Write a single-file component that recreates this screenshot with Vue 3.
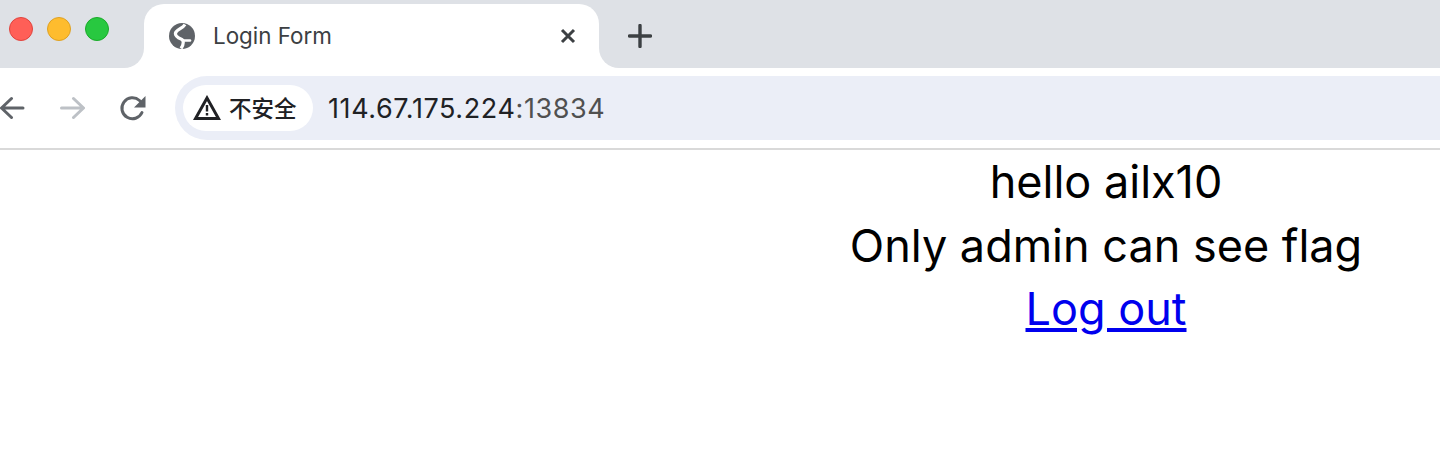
<template>
  <div class="browser">
    <!-- Tab strip -->
    <div class="tab-strip">
      <div class="strip-left">
        <span v-for="c in lights" :key="c" class="light" :class="c"></span>
      </div>
      <div class="tab-wrap">
        <div class="tab">
          <svg class="globe" viewBox="0 0 26 26">
            <circle cx="13" cy="13" r="13" fill="#5f6368" />
            <path d="M16 1.500C14 5 9 6 7 9C5 12 9 15 12 16C15 17 15 21 12 25.500" fill="none" stroke="#fff" stroke-width="3.200" />
            <path d="M14 17.500H21" fill="none" stroke="#fff" stroke-width="2.600" stroke-linecap="round" />
          </svg>
          <span class="tab-title">Login Form</span>
          <svg class="tab-close" viewBox="0 0 16 16">
            <path d="M2 2l12 12M14 2L2 14" stroke="#3c4043" stroke-width="3" />
          </svg>
        </div>
      </div>
      <div class="strip-right">
        <svg class="new-tab" viewBox="0 0 24 24">
          <path d="M12 1.500v21M1.500 12h21" stroke="#3c4043" stroke-width="3.400" stroke-linecap="round" />
        </svg>
      </div>
    </div>

    <!-- Toolbar -->
    <div class="toolbar">
      <svg class="nav back" viewBox="0 0 25 24">
        <path d="M23 12H1.500M11.500 2.500L1.500 12l10 9.500" fill="none" stroke="#5f6368" stroke-width="3" stroke-linecap="round" stroke-linejoin="round" />
      </svg>
      <svg class="nav forward" viewBox="0 0 25 24">
        <path d="M1.500 12h21.500M13.500 2.500L23.500 12l-10 9.500" fill="none" stroke="#bdc1c6" stroke-width="3" stroke-linecap="round" stroke-linejoin="round" />
      </svg>
      <svg class="nav reload" viewBox="0 0 28 28">
        <path d="M23 18.500A10.500 10.500 0 1 1 20.500 6.500l2 2" fill="none" stroke="#5f6368" stroke-width="3" stroke-linecap="round" />
        <path d="M26.500 2V13.500H15z" fill="#5f6368" />
      </svg>
      <div class="omnibox">
        <div class="chip">
          <svg class="warn" viewBox="0 0 28 26">
            <path d="M14 3L25.500 23.500H2.500z" fill="none" stroke="#202124" stroke-width="3" stroke-linejoin="miter" />
            <path d="M14 10v6.500M14 18v2.500" stroke="#202124" stroke-width="2.400" />
          </svg>
          <span class="chip-text">不安全</span>
        </div>
        <span class="url">114.67.175.224<span class="port">:13834</span></span>
      </div>
    </div>

    <!-- Page content -->
    <div class="page">
      <div class="line">hello ailx10</div>
      <div class="line">Only admin can see flag</div>
      <div class="line"><a href="#">Log out</a></div>
    </div>
  </div>
</template>

<script setup>
const lights = ['red', 'yellow', 'green']
</script>

<style>
html, body {
  margin: 0;
  background: #fff;
}
</style>

<style scoped>
.browser {
  height: 453px;
  overflow: hidden;
  background: #fff;
  font-family: "Liberation Sans", "Noto Sans CJK SC", sans-serif;
}

/* Tab strip */
.tab-strip {
  display: flex;
  height: 68px;
  background: #fff;
}

.strip-left {
  width: 144px;
  background: #dee1e6;
  border-bottom-right-radius: 20px;
  display: flex;
  gap: 14px;
  padding: 17px 0 0 9px;
  box-sizing: border-box;
}

.light {
  width: 24px;
  height: 24px;
  border-radius: 50%;
  box-sizing: border-box;
}

.light.red {
  background: #ff5f57;
  border: 1px solid #e0443e;
}

.light.yellow {
  background: #febc2e;
  border: 1px solid #dea123;
}

.light.green {
  background: #28c840;
  border: 1px solid #1aab29;
}

.tab-wrap {
  width: 455px;
  background: #dee1e6;
  padding-top: 4px;
  box-sizing: border-box;
}

.tab {
  height: 64px;
  background: #fff;
  border-radius: 20px 20px 0 0;
  display: flex;
  align-items: center;
  padding: 0 23px 0 25px;
  box-sizing: border-box;
}

.globe {
  width: 26px;
  height: 26px;
  flex-shrink: 0;
}

.tab-title {
  margin: -2px 0 0 18px;
  flex: 1;
  font-family: Inter, sans-serif;
  font-size: 22.400px;
  color: #3c4043;
}

.tab-close {
  width: 16px;
  height: 16px;
}

.strip-right {
  flex: 1;
  background: #dee1e6;
  border-bottom-left-radius: 20px;
  display: flex;
  align-items: center;
  padding: 4px 0 0 29px;
  box-sizing: border-box;
}

.new-tab {
  width: 24px;
  height: 24px;
}

/* Toolbar */
.toolbar {
  height: 80px;
  border-bottom: 2px solid #d9d9d9;
  display: flex;
  align-items: center;
  background: #fff;
}

.nav {
  flex-shrink: 0;
}

.back {
  width: 25px;
  height: 24px;
}

.forward {
  width: 25px;
  height: 24px;
  margin-left: 35px;
}

.reload {
  width: 28px;
  height: 28px;
  margin-left: 34px;
}

.omnibox {
  margin-left: 28px;
  flex: 1;
  height: 64px;
  background: #ebeef7;
  border-radius: 32px 0 0 32px;
  display: flex;
  align-items: center;
  padding-left: 8px;
}

.chip {
  width: 130px;
  height: 46px;
  background: #fff;
  border-radius: 23px;
  display: flex;
  align-items: center;
  padding-left: 10px;
  box-sizing: border-box;
}

.warn {
  width: 28px;
  height: 26px;
}

.chip-text {
  margin: -3px 0 0 8px;
  font-family: "Noto Sans CJK SC", sans-serif;
  font-size: 22.500px;
  font-weight: 500;
  color: #202124;
}

.url {
  margin-left: 15px;
  font-family: Inter, sans-serif;
  font-size: 27px;
  letter-spacing: 0.600px;
  color: #202124;
}

.port {
  color: #505050;
}

/* Page */
.page {
  padding-left: 772px;
  text-align: center;
  font-family: Inter, sans-serif;
  font-size: 45px;
  line-height: 63.500px;
  color: #000;
}

.page a {
  color: #0000ee;
  text-decoration: underline;
}
</style>
